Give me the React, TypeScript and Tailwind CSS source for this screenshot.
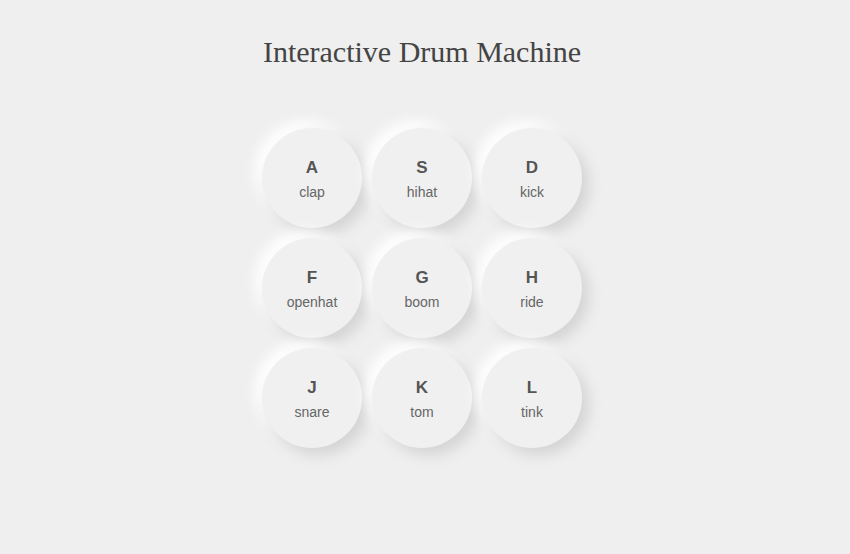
const pads = [
  { key: 'A', sound: 'clap' },
  { key: 'S', sound: 'hihat' },
  { key: 'D', sound: 'kick' },
  { key: 'F', sound: 'openhat' },
  { key: 'G', sound: 'boom' },
  { key: 'H', sound: 'ride' },
  { key: 'J', sound: 'snare' },
  { key: 'K', sound: 'tom' },
  { key: 'L', sound: 'tink' },
];

export default function App() {
  return (
    <div className="min-h-screen bg-[#efefef] flex flex-col items-center pt-[34px] pr-[6px]">
      <h1 className="text-[30px] leading-[35px] text-[#444] font-['Liberation_Serif',serif]">
        Interactive Drum Machine
      </h1>
      <div className="grid grid-cols-3 gap-[10px] mt-[59px] font-['Liberation_Sans',Arial,sans-serif]">
        {pads.map((p) => (
          <button
            key={p.key}
            className="w-[100px] h-[100px] rounded-full bg-[#f0f0f0] flex flex-col items-center justify-center pt-[2px] shadow-[7px_7px_14px_#d4d4d4,-7px_-7px_14px_#ffffff]"
          >
            <span className="text-[17px] leading-5 font-bold text-[#555]">{p.key}</span>
            <span className="text-[14px] leading-4 text-[#666] mt-[6px]">{p.sound}</span>
          </button>
        ))}
      </div>
    </div>
  );
}
